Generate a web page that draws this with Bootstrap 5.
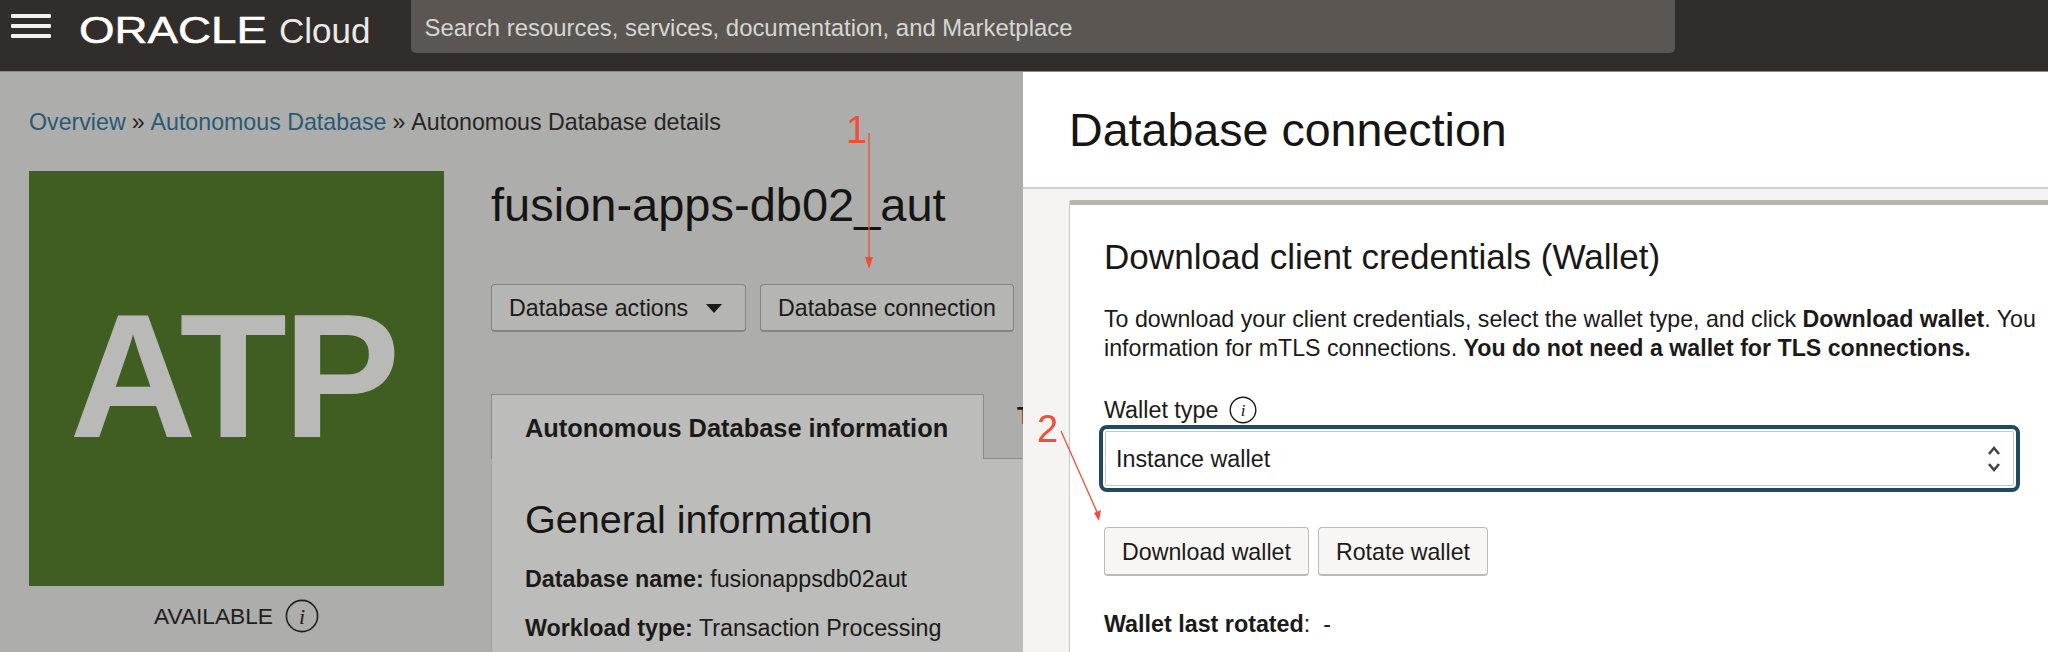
<!doctype html>
<html lang="en">
<head>
<meta charset="utf-8">
<title>Database connection</title>
<link href="https://cdn.jsdelivr.net/npm/bootstrap@5.3.0/dist/css/bootstrap.min.css" rel="stylesheet">
<style>
html,body{height:652px;overflow:hidden}
body{font-family:"Liberation Sans",Arial,sans-serif;font-size:23.3px;color:#1c1a18;background:#fff;position:relative}
.topbar{height:72px;background:#312d2a;border-bottom:1px solid #8d8a87;padding:0}
.burger{width:40px;margin-left:11px;margin-top:14px;align-self:flex-start;display:flex;flex-direction:column;gap:6px}
.burger i{display:block;height:4px;background:#f2f2f2;border-radius:1px}
.logo{margin-left:28px;margin-top:15px;align-self:flex-start;width:192px;height:30px;display:block;overflow:visible}
.logo text{font-family:"Liberation Sans",sans-serif;font-weight:400;font-size:36px;fill:#fff;stroke:#fff;stroke-width:.5px}
.cloudword{font-size:35px;line-height:36px;color:#e9e9e9;margin-left:8px;margin-top:13px;align-self:flex-start}
.searchbox{width:1264px;height:53px;margin-left:41px;align-self:flex-start;background:#5b5652;border-radius:0 0 5px 5px;color:#d8d6d3;font-size:23.9px;line-height:55px;padding-left:13px}
.main-wrap{height:580px}
.leftpane{width:1023px;background:#adadac;overflow:hidden;padding:35px 0 0 29px;position:relative}
.crumbs{font-size:23.2px;line-height:30px;margin:0;white-space:nowrap;color:#262524}
.crumbs a{color:#285a75;text-decoration:none}
.crumbs b{font-weight:400;margin:0 6px}
.hero{margin-top:34px;gap:47px}
.tile{width:415px;flex:none}
.tile-square{height:415px;background:#415e22;color:#b9b9b7;font-weight:700;font-size:176px;letter-spacing:-4px;line-height:1;text-align:center;padding-top:117px;padding-right:7px}
.tile-state{font-size:22.7px;margin-top:12px;line-height:36px;color:#1f1e1d;gap:12px}
.infoicon{flex:none;display:block}
.detail{flex:1 1 auto;min-width:560px}
.res-title{font-size:47px;font-weight:400;line-height:52px;margin:8px 0 0;letter-spacing:0;color:#161514;white-space:nowrap}
.act-row{margin-top:53px;gap:14px}
.act-btn{height:48px;padding:2px 0 0 17px;background:#b5b5b3;border:1px solid #838381;border-bottom-width:2px;border-radius:4px;color:#1c1a18;white-space:nowrap;font-size:23.2px;text-align:left}
.act-btn1{width:255px}.act-btn2{width:254px}
.tri{display:inline-block;width:0;height:0;border-left:8px solid transparent;border-right:8px solid transparent;border-top:9px solid #1c1a18;margin-left:18px;vertical-align:3px}
.tabset{margin-top:62px;border:0;flex-wrap:nowrap;width:532px}
.tabhead{width:493px;height:65px;background:#bcbcba;border:1px solid #8b8b89;border-bottom:0;font-weight:700;font-size:25.4px;line-height:66px;padding-left:33px;white-space:nowrap;color:#1c1a18;flex:none}
.tabnext{flex:1;height:65px;border-bottom:1px solid #8b8b89;padding-left:33px;line-height:44px;font-weight:700;white-space:nowrap;overflow:hidden}
.tabbody{background:#bcbcba;border-left:1px solid #a4a4a2;padding:36px 0 0 33px;height:300px;position:relative;width:600px}
.sec-h{font-size:39.6px;font-weight:400;line-height:48px;margin:0 0 21px;color:#171615}
.kv{margin:0 0 19px;line-height:30px;white-space:nowrap}
.rightpane{flex:1;background:#f5f4f2;overflow:hidden;min-width:0}
.panel-head{height:117px;background:#fff;border-bottom:2px solid #d0cecb;padding:29px 0 0 46px}
.panel-head h1{font-size:46.6px;font-weight:400;line-height:58px;margin:0;color:#161514;white-space:nowrap}
.wallet-card{margin:11px -60px 0 46px;background:#fff;border:0;border-left:1px solid #c9c7c4;border-top:5px solid #b9b4ac;border-radius:3px 0 0 0;padding:31px 0 0 34px;height:500px}
.wallet-card h2{font-size:35.1px;font-weight:400;line-height:42px;margin:0 0 27px;white-space:nowrap;color:#1a1817}
.lead-txt{font-size:23.2px;line-height:28.5px;margin:0;white-space:nowrap;color:#1c1a18}
.wtype{line-height:30px;margin:33px 0 0;gap:11px;display:flex;align-items:center}
.selwrap{width:921px;margin:0 0 0 -5px}
.selwrap select{height:67px;font-size:23.3px;font-family:inherit;color:#1c1a18;padding:2px 50px 0 13px;border:4px solid #1f4a60;box-shadow:inset 0 0 0 2px #fff,inset 0 0 0 3px #c8c6c3;border-radius:8px;background-size:18px 36px;background-position:right 13px center;background-image:url("data:image/svg+xml,%3Csvg xmlns='http://www.w3.org/2000/svg' viewBox='0 0 18 36'%3E%3Cpath d='M4 13l5-6 5 6M4 23l5 6 5-6' fill='none' stroke='%23444' stroke-width='2.6'/%3E%3C/svg%3E")}
.wbtns{margin-top:35px;gap:9px}
.wbtn{height:49px;background:#f7f6f4;border:1px solid #bdbab6;border-bottom-width:2px;border-radius:4px;color:#1c1a18;font-size:23.2px;padding:2px 0 0;white-space:nowrap}
.wbtn1{width:205px}.wbtn2{width:170px}
.rotated{margin:33px 0 0;line-height:30px;white-space:nowrap}
.marks{position:absolute;left:0;top:0;width:2048px;height:652px;pointer-events:none}
.mk-num{position:absolute;color:#ef4f37;font-size:38px;line-height:38px}
.mk1{left:846px;top:111px}
.mk2{left:1037px;top:410px}
</style>
</head>
<body>
<nav class="navbar topbar d-flex flex-nowrap justify-content-start align-items-start">
  <div class="burger" aria-label="Menu"><i></i><i></i><i></i></div>
  <svg class="logo" viewBox="0 0 192 30" role="img" aria-label="Oracle"><text x="0" y="28" textLength="188" lengthAdjust="spacingAndGlyphs">ORACLE</text></svg>
  <span class="cloudword">Cloud</span>
  <div class="searchbox">Search resources, services, documentation, and Marketplace</div>
</nav>
<div class="d-flex main-wrap">
  <section class="leftpane">
    <div class="crumbs"><a href="#">Overview</a><b>»</b><a href="#">Autonomous Database</a><b>»</b>Autonomous Database details</div>
    <div class="d-flex hero">
      <div class="tile">
        <div class="tile-square">ATP</div>
        <div class="tile-state d-flex justify-content-center align-items-center">
          <span>AVAILABLE</span>
          <svg class="infoicon" width="34" height="34" viewBox="0 0 34 34"><circle cx="17" cy="17" r="15.6" fill="none" stroke="#1f1e1d" stroke-width="1.6"/><text x="17" y="24.5" text-anchor="middle" font-family="Liberation Serif" font-style="italic" font-size="22" fill="#1f1e1d">i</text></svg>
        </div>
      </div>
      <div class="detail">
        <h2 class="res-title">fusion-apps-db02_aut</h2>
        <div class="d-flex act-row">
          <button class="btn act-btn act-btn1" type="button">Database actions<span class="tri"></span></button>
          <button class="btn act-btn act-btn2" type="button">Database connection</button>
        </div>
        <div class="d-flex tabset">
          <div class="tabhead">Autonomous Database information</div>
          <div class="tabnext">T</div>
        </div>
        <div class="tabbody">
          <h3 class="sec-h">General information</h3>
          <p class="kv"><strong>Database name:</strong> fusionappsdb02aut</p>
          <p class="kv"><strong>Workload type:</strong> Transaction Processing</p>
        </div>
      </div>
    </div>
  </section>
  <section class="rightpane">
    <div class="panel-head"><h1>Database connection</h1></div>
    <div class="card wallet-card">
      <h2>Download client credentials (Wallet)</h2>
      <p class="lead-txt">To download your client credentials, select the wallet type, and click <strong>Download wallet</strong>. You<br>information for mTLS connections. <strong>You do not need a wallet for TLS connections.</strong></p>
      <div class="wtype"><span>Wallet type</span>
        <svg class="infoicon" width="28" height="28" viewBox="0 0 28 28"><circle cx="14" cy="14" r="12.8" fill="none" stroke="#1c1a18" stroke-width="1.4"/><text x="14" y="20" text-anchor="middle" font-family="Liberation Serif" font-style="italic" font-size="17" fill="#1c1a18">i</text></svg>
      </div>
      <div class="selwrap"><select class="form-select" aria-label="Wallet type"><option>Instance wallet</option><option>Regional wallet</option></select></div>
      <div class="d-flex wbtns">
        <button class="btn wbtn wbtn1" type="button">Download wallet</button>
        <button class="btn wbtn wbtn2" type="button">Rotate wallet</button>
      </div>
      <p class="rotated"><strong>Wallet last rotated</strong>:&nbsp; -</p>
    </div>
  </section>
</div>
<span class="mk-num mk1">1</span>
<span class="mk-num mk2">2</span>
<svg class="marks" viewBox="0 0 2048 652" aria-hidden="true">
  <path d="M869 133V262" stroke="#ef4f37" stroke-width="1.3" fill="none"/>
  <path d="M865 257h8l-4 12z" fill="#ef4f37"/>
  <path d="M1061 431L1097 512" stroke="#ef4f37" stroke-width="1.3" fill="none"/>
  <path d="M1094 513l7-3 -2 11z" fill="#ef4f37"/>
</svg>
<script src="https://cdn.jsdelivr.net/npm/bootstrap@5.3.0/dist/js/bootstrap.bundle.min.js"></script>
</body>
</html>
